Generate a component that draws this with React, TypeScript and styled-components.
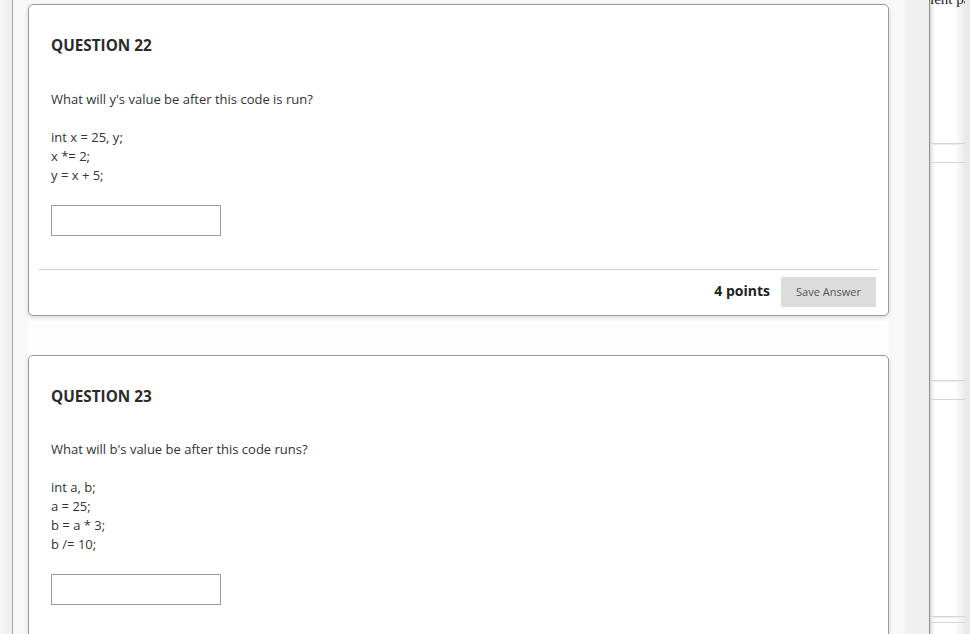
import React from "react";
import styled, { createGlobalStyle } from "styled-components";

const GlobalStyle = createGlobalStyle`
  html, body {
    margin: 0;
    padding: 0;
    height: 100%;
    overflow: hidden;
    background: #f8f8f8;
  }
  #root {
    height: 100%;
  }
`;

const Page = styled.div`
  display: flex;
  height: 634px;
  width: 970px;
  overflow: hidden;
  font-family: "Open Sans", "Liberation Sans", sans-serif;
  color: #333;
`;

const LeftRail = styled.div`
  width: 12px;
  flex: none;
  background: linear-gradient(to right, #f6f6f6, #ececec);
  border-right: 1px solid #a8a8a8;
`;

const Main = styled.div`
  width: 892px;
  flex: none;
  box-sizing: border-box;
  padding: 4px 16px 0 15px;
  background: #f8f8f8;
`;

const Sheet = styled.div`
  background: #fdfdfd;
  display: flex;
  flex-direction: column;
  gap: 39px;
  height: 100%;
`;

const Card = styled.section`
  background: #fff;
  border: 1px solid #9a9a9a;
  border-radius: 5px;
  box-shadow: 0 2px 4px rgba(0, 0, 0, 0.14);
  padding: 30px 10px 8px 10px;
  flex: none;

  /* the next card runs on past the bottom of the window */
  &:last-child {
    min-height: 320px;
  }
`;

const Body = styled.div`
  padding: 0 12px;
`;

const Title = styled.h2`
  margin: 0;
  font-size: 15.3px;
  line-height: 20px;
  font-weight: 700;
  color: #2b2b2b;
`;

const Prompt = styled.p<{ $top: number }>`
  margin: ${(p) => p.$top}px 0 19px;
  font-size: 13px;
  line-height: 19px;
`;

const Code = styled.div`
  font-size: 13px;
  line-height: 19px;
  white-space: pre;
`;

const AnswerBox = styled.input`
  display: block;
  box-sizing: border-box;
  width: 170px;
  height: 31px;
  margin-top: 20px;
  border: 1px solid #9a9a9a;
  border-radius: 0;
  background: #fff;
  outline: none;
`;

const Footer = styled.div`
  margin-top: 33px;
  border-top: 1px solid #d0d0d0;
  padding: 7px 2px 0 0;
  display: flex;
  justify-content: flex-end;
  align-items: center;
  gap: 11px;
`;

const Points = styled.span`
  font-size: 14px;
  font-weight: 700;
  color: #222;
  margin-bottom: 3px;
`;

const SaveButton = styled.button`
  width: 95px;
  height: 30px;
  border: none;
  background: #dcdcdc;
  color: #555;
  font-family: "Open Sans", "Liberation Sans", sans-serif;
  font-size: 11px;
  padding: 0 0 1px;
`;

const Gutter = styled.div`
  width: 24px;
  flex: none;
  background: #f0f0f0;
`;

const SidePanel = styled.div`
  width: 35px;
  flex: none;
  border-left: 1px solid #8c8c8c;
  display: flex;
  flex-direction: column;
  background: linear-gradient(to right, #dedede 0, #fff 5px, #fff 70%, #ebebeb 100%);
`;

const SideLabel = styled.div`
  font-family: "Liberation Serif", serif;
  font-size: 15px;
  line-height: 16px;
  margin-top: -9px;
  height: 16px;
  white-space: nowrap;
  overflow: hidden;
  color: #222;
  flex: none;
`;

const SideBand = styled.div<{ $h: number }>`
  height: ${(p) => p.$h}px;
  flex: none;
  box-sizing: border-box;
  border-bottom: 1px solid #d6d6d6;
`;

const SideGap = styled.div<{ $h: number }>`
  height: ${(p) => p.$h}px;
  flex: none;
  box-sizing: border-box;
  border-top: 1px solid #ececec;
  border-bottom: 1px solid #d6d6d6;
`;

const EdgeStrip = styled.div`
  flex: 1;
  background: #e9e9e9;
`;

type Question = {
  num: number;
  prompt: string;
  code: string[];
  promptTop: number;
  points?: number;
};

const questions: Question[] = [
  {
    num: 22,
    prompt: "What will y's value be after this code is run?",
    code: ["int x = 25, y;", "x *= 2;", "y = x + 5;"],
    promptTop: 35,
    points: 4,
  },
  {
    num: 23,
    prompt: "What will b's value be after this code runs?",
    code: ["int a, b;", "a = 25;", "b = a * 3;", "b /= 10;"],
    promptTop: 34,
  },
];

const App = () => {
  return (
    <Page>
      <GlobalStyle />
      <LeftRail />
      <Main>
        <Sheet>
          {questions.map((q) => (
            <Card key={q.num}>
              <Body>
                <Title>QUESTION {q.num}</Title>
                <Prompt $top={q.promptTop}>{q.prompt}</Prompt>
                {q.code.map((line) => (
                  <Code key={line}>{line}</Code>
                ))}
                <AnswerBox type="text" />
              </Body>
              {q.points && (
                <Footer>
                  <Points>{q.points} points</Points>
                  <SaveButton>Save Answer</SaveButton>
                </Footer>
              )}
            </Card>
          ))}
        </Sheet>
      </Main>
      <Gutter />
      <SidePanel>
        <SideLabel>ient pa</SideLabel>
        <SideBand $h={137} />
        <SideGap $h={19} />
        <SideBand $h={218} />
        <SideGap $h={19} />
        <SideBand $h={217} />
        <SideGap $h={6} />
      </SidePanel>
      <EdgeStrip />
    </Page>
  );
};

export default App;
